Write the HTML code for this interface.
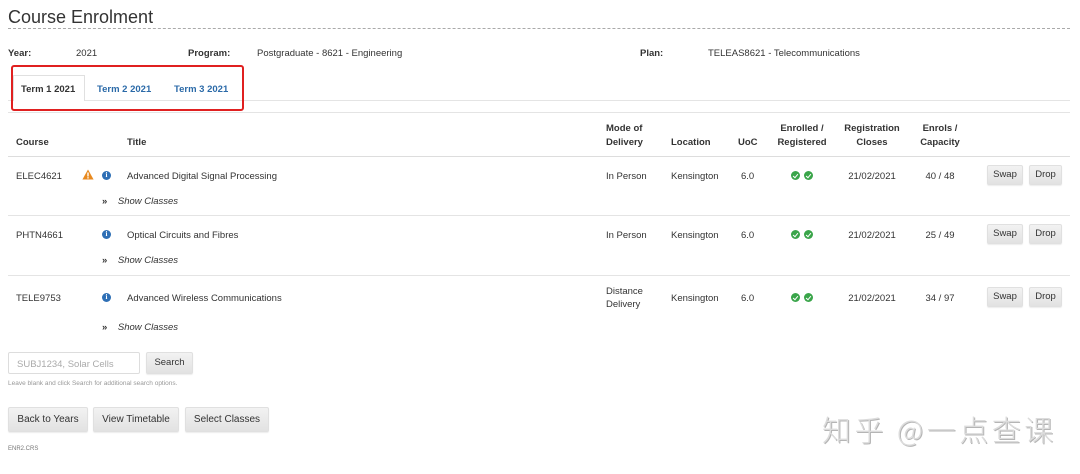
<!DOCTYPE html>
<html><head><meta charset="utf-8"><style>
*{margin:0;padding:0;box-sizing:border-box}
body{width:1080px;height:474px;background:#fff;position:relative;overflow:hidden;font-family:"Liberation Sans",Arial,sans-serif;font-size:9.5px;color:#333}
.a{position:absolute;white-space:nowrap;line-height:24px}
.b{font-weight:bold}
.hl{position:absolute;height:1px;background:#e4e4e4}
.btn{position:absolute;background:linear-gradient(#f2f2f2,#e2e2e2);border:1px solid #e0e0e0;border-radius:2px;text-align:center;color:#333;box-shadow:0 1px 1px rgba(0,0,0,.08)}
.ok{display:inline-block;width:9px;height:9px;border-radius:50%;background:#3aa54a;position:relative;margin:0 2px;vertical-align:-1px}
.ok:after{content:"";position:absolute;left:2.5px;top:1.5px;width:2px;height:4px;border:solid #fff;border-width:0 1.5px 1.5px 0;transform:rotate(40deg)}
.inf{position:absolute;width:9px;height:9px;border-radius:50%;background:#2e6fb5;color:#fff;font-size:7px;font-weight:bold;text-align:center;line-height:9px;font-family:"Liberation Serif",serif}
.c{text-align:center}
</style></head><body>
<div class="a" style="left:8px;top:7px;font-size:18px;line-height:20px;color:#333">Course Enrolment</div>
<div style="position:absolute;left:8px;top:28px;width:1062px;border-top:1px dashed #aaa"></div>

<div class="a b" style="left:8px;top:42px">Year:</div>
<div class="a" style="left:76px;top:42px">2021</div>
<div class="a b" style="left:188px;top:42px">Program:</div>
<div class="a" style="left:257px;top:42px">Postgraduate - 8621 - Engineering</div>
<div class="a b" style="left:640px;top:42px">Plan:</div>
<div class="a" style="left:708px;top:42px">TELEAS8621 - Telecommunications</div>

<div class="hl" style="left:8px;top:100px;width:1062px"></div>
<div style="position:absolute;left:13px;top:75px;width:72px;height:26px;border:1px solid #e0e0e0;border-bottom:none;background:#fff"></div>
<div class="a b" style="left:21px;top:78px">Term 1 2021</div>
<div class="a b" style="left:97px;top:78px;color:#2b6aa8">Term 2 2021</div>
<div class="a b" style="left:174px;top:78px;color:#2b6aa8">Term 3 2021</div>
<div style="position:absolute;left:11px;top:65px;width:233px;height:46px;border:2px solid #e02020;border-radius:3px"></div>
<div class="hl" style="left:8px;top:112px;width:1062px"></div>

<div class="a b" style="left:16px;top:131px">Course</div>
<div class="a b" style="left:127px;top:131px">Title</div>
<div class="a b" style="left:606px;top:122px;line-height:14px">Mode of<br>Delivery</div>
<div class="a b" style="left:671px;top:131px">Location</div>
<div class="a b" style="left:738px;top:131px">UoC</div>
<div class="a b c" style="left:772px;top:122px;width:60px;line-height:14px">Enrolled /<br>Registered</div>
<div class="a b c" style="left:840px;top:122px;width:64px;line-height:14px">Registration<br>Closes</div>
<div class="a b c" style="left:910px;top:122px;width:60px;line-height:14px">Enrols /<br>Capacity</div>
<div class="hl" style="left:8px;top:156px;width:1062px;background:#ddd"></div>

<!-- row1 -->
<div class="a" style="left:16px;top:165px">ELEC4621</div>
<svg style="position:absolute;left:82px;top:169px" width="12" height="11" viewBox="0 0 12 11"><path d="M6 0.5 L11.6 10.5 H0.4Z" fill="#e8891f"/><rect x="5.3" y="3.5" width="1.4" height="4" fill="#fff"/><rect x="5.3" y="8.2" width="1.4" height="1.3" fill="#fff"/></svg>
<div class="inf" style="left:102px;top:171px">i</div>
<div class="a" style="left:127px;top:165px">Advanced Digital Signal Processing</div>
<div class="a" style="left:102px;top:190px"><b>»</b>&nbsp;&nbsp;&nbsp; <i>Show Classes</i></div>
<div class="a" style="left:606px;top:165px">In Person</div>
<div class="a" style="left:671px;top:165px">Kensington</div>
<div class="a" style="left:741px;top:165px">6.0</div>
<div class="a c" style="left:772px;top:165px;width:60px"><span class="ok"></span><span class="ok"></span></div>
<div class="a c" style="left:840px;top:165px;width:64px">21/02/2021</div>
<div class="a c" style="left:910px;top:165px;width:60px">40 / 48</div>
<div class="btn" style="left:987px;top:165px;width:36px;height:20px;line-height:18px">Swap</div>
<div class="btn" style="left:1029px;top:165px;width:33px;height:20px;line-height:18px">Drop</div>
<div class="hl" style="left:8px;top:215px;width:1062px"></div>

<!-- row2 -->
<div class="a" style="left:16px;top:224px">PHTN4661</div>
<div class="inf" style="left:102px;top:230px">i</div>
<div class="a" style="left:127px;top:224px">Optical Circuits and Fibres</div>
<div class="a" style="left:102px;top:249px"><b>»</b>&nbsp;&nbsp;&nbsp; <i>Show Classes</i></div>
<div class="a" style="left:606px;top:224px">In Person</div>
<div class="a" style="left:671px;top:224px">Kensington</div>
<div class="a" style="left:741px;top:224px">6.0</div>
<div class="a c" style="left:772px;top:224px;width:60px"><span class="ok"></span><span class="ok"></span></div>
<div class="a c" style="left:840px;top:224px;width:64px">21/02/2021</div>
<div class="a c" style="left:910px;top:224px;width:60px">25 / 49</div>
<div class="btn" style="left:987px;top:224px;width:36px;height:20px;line-height:18px">Swap</div>
<div class="btn" style="left:1029px;top:224px;width:33px;height:20px;line-height:18px">Drop</div>
<div class="hl" style="left:8px;top:275px;width:1062px"></div>

<!-- row3 -->
<div class="a" style="left:16px;top:287px">TELE9753</div>
<div class="inf" style="left:102px;top:293px">i</div>
<div class="a" style="left:127px;top:287px">Advanced Wireless Communications</div>
<div class="a" style="left:102px;top:316px"><b>»</b>&nbsp;&nbsp;&nbsp; <i>Show Classes</i></div>
<div class="a" style="left:606px;top:285px;line-height:13px">Distance<br>Delivery</div>
<div class="a" style="left:671px;top:287px">Kensington</div>
<div class="a" style="left:741px;top:287px">6.0</div>
<div class="a c" style="left:772px;top:287px;width:60px"><span class="ok"></span><span class="ok"></span></div>
<div class="a c" style="left:840px;top:287px;width:64px">21/02/2021</div>
<div class="a c" style="left:910px;top:287px;width:60px">34 / 97</div>
<div class="btn" style="left:987px;top:287px;width:36px;height:20px;line-height:18px">Swap</div>
<div class="btn" style="left:1029px;top:287px;width:33px;height:20px;line-height:18px">Drop</div>

<div style="position:absolute;left:8px;top:352px;width:132px;height:22px;border:1px solid #ddd;border-radius:2px"></div>
<div class="a" style="left:17px;top:353px;color:#aaa">SUBJ1234, Solar Cells</div>
<div class="btn" style="left:146px;top:352px;width:47px;height:22px;line-height:20px">Search</div>
<div class="a" style="left:8px;top:372px;font-size:6.5px;color:#999">Leave blank and click Search for additional search options.</div>

<div class="btn" style="left:8px;top:407px;width:80px;height:25px;line-height:23px;font-size:10px">Back to Years</div>
<div class="btn" style="left:93px;top:407px;width:86px;height:25px;line-height:23px;font-size:10px">View Timetable</div>
<div class="btn" style="left:185px;top:407px;width:84px;height:25px;line-height:23px;font-size:10px">Select Classes</div>
<div class="a" style="left:8px;top:437px;font-size:6px;color:#777">ENR2.CRS</div>

<div class="a" style="left:822px;top:412px;font-size:29px;line-height:34px;color:#dcdcdc;font-weight:300;letter-spacing:3.5px;font-family:'Noto Sans CJK SC',sans-serif;text-shadow:1px 1px 0 #b5b5b5">知乎 @一点查课</div>
</body></html>
